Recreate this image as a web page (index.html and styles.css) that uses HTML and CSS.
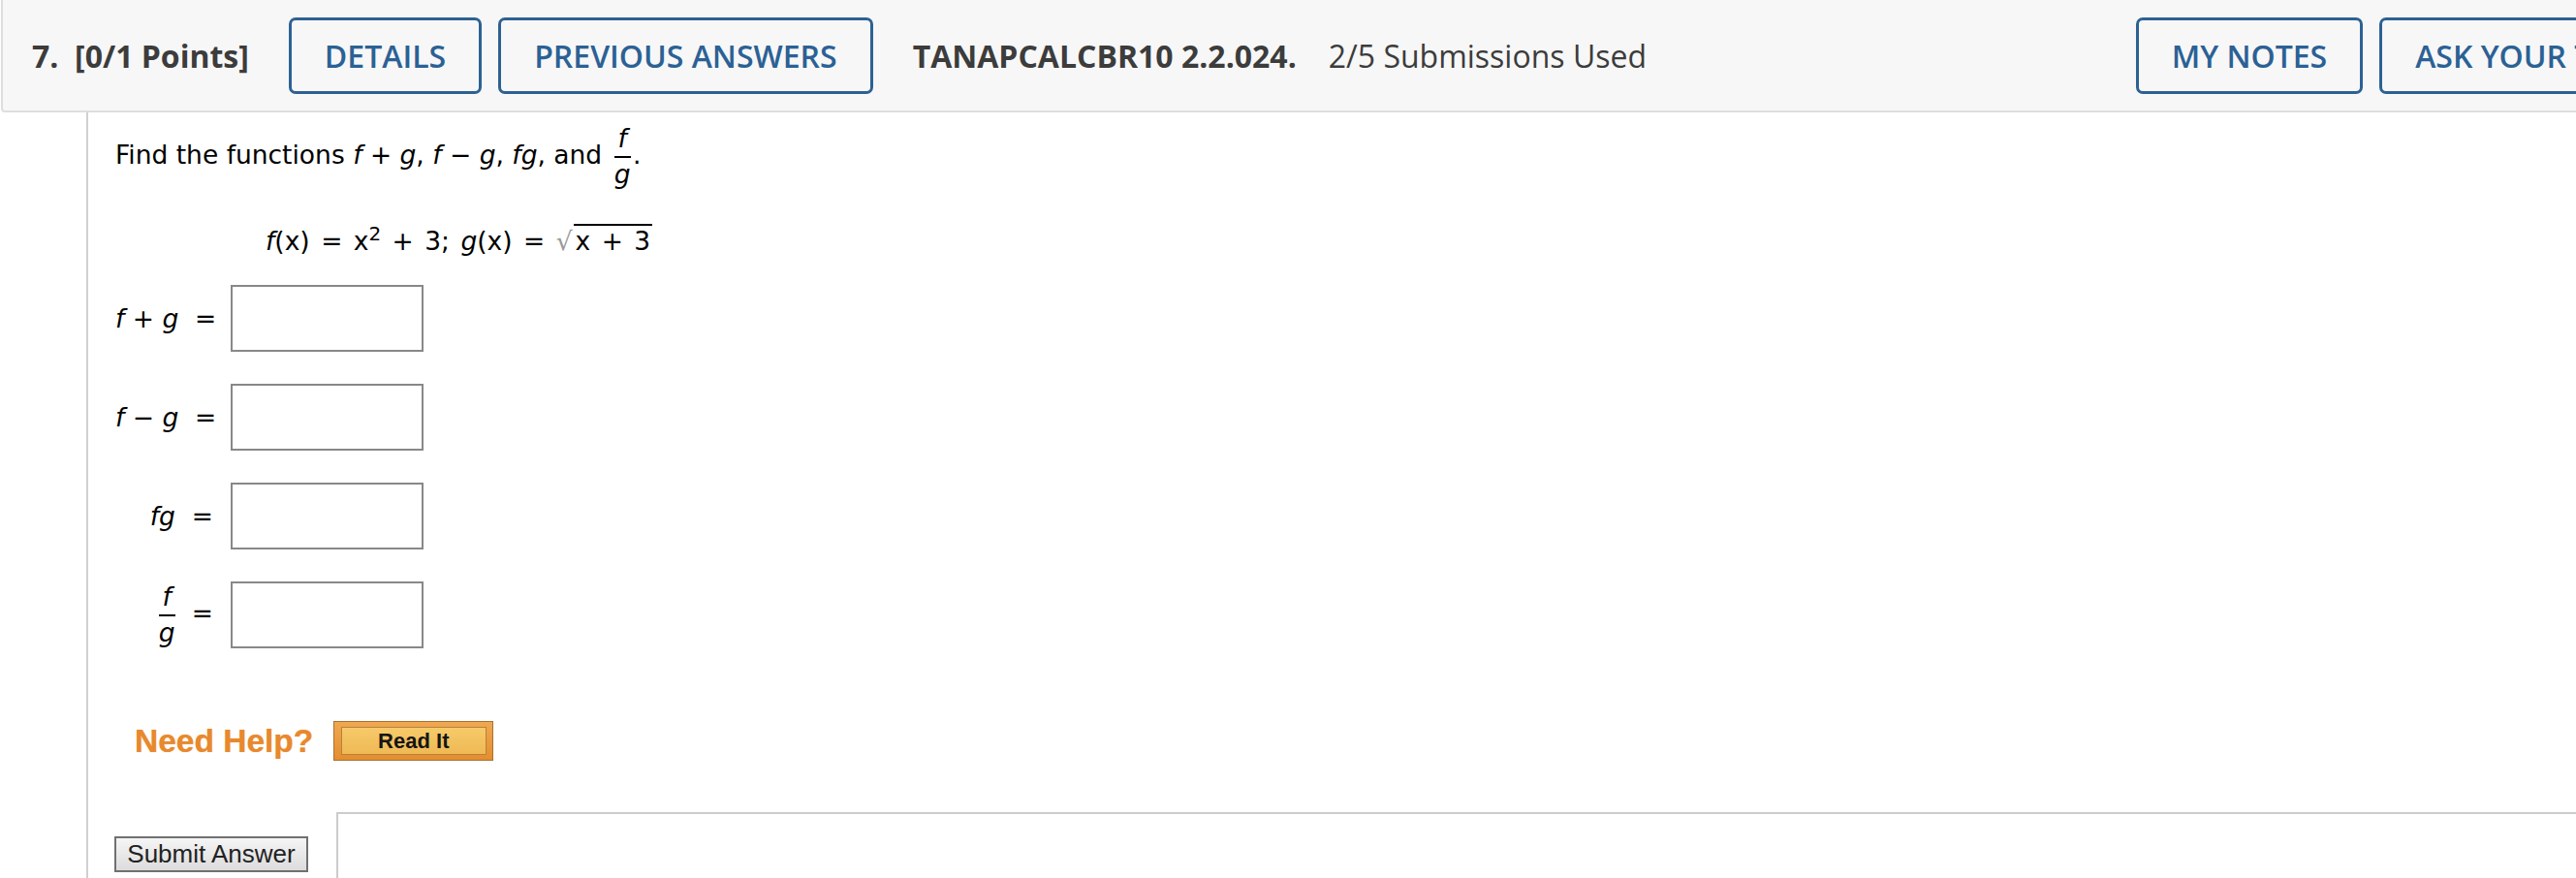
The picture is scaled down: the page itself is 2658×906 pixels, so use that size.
FILE: index.html
```html
<!DOCTYPE html>
<html lang="en">
<head>
  <meta charset="UTF-8">
  <title>Question 7</title>
  <link rel="stylesheet" href="styles.css">
</head>
<body>
<div class="page">

<div class="qhead">
  <span class="qnum">7.&nbsp; [0/1 Points]</span>
  <button class="hbtn">DETAILS</button>
  <button class="hbtn">PREVIOUS ANSWERS</button>
  <span class="qid">TANAPCALCBR10 2.2.024.</span>
  <span class="subs">2/5 Submissions Used</span>
  <div class="hright">
    <button class="hbtn">MY NOTES</button>
    <button class="hbtn">ASK YOUR TEACHER</button>
  </div>
</div>

<div class="qbody">
  <p class="prompt">Find the functions <i>f</i> + <i>g</i>, <i>f</i> &minus; <i>g</i>, <i>fg</i>, and <span class="frac"><span class="num"><i>f</i></span><span class="den"><i>g</i></span></span>.</p>

  <p class="given"><i>f</i>(x) = x<sup>2</sup> + 3; <i>g</i>(x) = <span class="rad">&radic;</span><span class="radicand">x + 3</span></p>

  <div class="answers">
    <span class="lbl"><i>f</i> + <i>g</i>&nbsp; =</span>
    <input class="ans" type="text">
    <span class="lbl"><i>f</i> &minus; <i>g</i>&nbsp; =</span>
    <input class="ans" type="text">
    <span class="lbl"><i>fg</i>&nbsp; =</span>
    <input class="ans" type="text">
    <span class="lbl"><span class="frac"><span class="num"><i>f</i></span><span class="den"><i>g</i></span></span>&nbsp; =</span>
    <input class="ans" type="text">
  </div>

  <div class="help">
    <span class="needhelp">Need Help?</span>
    <span class="readit"><span class="readit-in">Read It</span></span>
  </div>

  <div class="submitrow">
    <button class="submit">Submit Answer</button>
    <div class="feedback"></div>
  </div>
</div>

</div>
</body>
</html>
```

FILE: styles.css
```css
body {
  margin: 0;
  overflow: hidden;
  background: #fff;
  color: #000;
  font-family: "DejaVu Sans", Verdana, sans-serif;
}
.page {
  width: 2863px;
}

/* question header bar */
.qhead {
  display: flex;
  align-items: center;
  height: 114px;
  margin-left: 1px;
  padding: 0 30px;
  background: #f7f7f7;
  border-left: 2px solid #dedede;
  border-bottom: 2px solid #dedede;
  border-bottom-left-radius: 4px;
  font-family: "Open Sans", sans-serif;
  color: #3c3c3c;
  white-space: nowrap;
}
.qnum {
  font-size: 32px;
  font-weight: 700;
  margin-right: 41px;
}
.hbtn {
  height: 79px;
  padding: 0 34px;
  margin-right: 17px;
  border: 3px solid #2d6193;
  border-radius: 7px;
  background: #f7f7f7;
  color: #2b6195;
  font-family: "Open Sans", sans-serif;
  font-size: 32px;
  font-weight: 600;
}
.hbtn.wide {
  padding: 0 32px;
}
.qid {
  font-size: 32px;
  font-weight: 700;
  margin-left: 24px;
  margin-right: 33px;
}
.subs {
  font-size: 32px;
}
.hright {
  margin-left: auto;
  display: flex;
}
.hright .hbtn:last-child {
  margin-right: 0;
}

/* question body */
.qbody {
  margin-left: 89px;
  padding: 13px 0 0 28px;
  border-left: 2px solid #d0d0d0;
  font-size: 26.5px;
}
.prompt {
  margin: 0;
  line-height: 30px;
}
.frac {
  display: inline-flex;
  flex-direction: column;
  align-items: center;
  vertical-align: middle;
  line-height: 28px;
}
.prompt .frac {
  margin: 0 2px 0 4px;
}
.frac .num {
  padding: 0 4px 4px;
  border-bottom: 2px solid #000;
}
.frac .den {
  padding-top: 3px;
}
.given {
  margin: 40px 0 0 155px;
  line-height: 30px;
  word-spacing: 3px;
}
.given sup {
  font-size: 20px;
  line-height: 0;
}
.rad {
  color: #999;
  margin-right: 1px;
}
.radicand {
  border-top: 2px solid #000;
  padding: 0 2px;
}

.answers {
  display: grid;
  grid-template-columns: 101px 199px;
  grid-auto-rows: 69px;
  column-gap: 18px;
  row-gap: 33px;
  align-items: center;
  margin-top: 30px;
}
.lbl {
  text-align: right;
  white-space: nowrap;
}
.ans {
  box-sizing: border-box;
  width: 199px;
  height: 69px;
  margin: 0;
  border: 2px solid #888;
  background: #fff;
}

.help {
  display: flex;
  align-items: center;
  height: 41px;
  margin-top: 75px;
  padding-left: 20px;
}
.needhelp {
  font-family: "Liberation Sans", Arial, sans-serif;
  font-size: 33.5px;
  font-weight: 700;
  color: #e8892e;
  text-shadow: 0 0 1px rgba(232, 137, 46, 0.7);
  margin-right: 21px;
}
.readit {
  box-sizing: border-box;
  display: flex;
  align-items: center;
  justify-content: center;
  width: 165px;
  height: 41px;
  border: 1px solid #a8722f;
  background: linear-gradient(#f0a851, #e38d2f);
}
.readit-in {
  box-sizing: border-box;
  width: 150px;
  height: 29px;
  border: 1px solid #b9813b;
  background: linear-gradient(#f6ca6a, #efb955);
  font-family: "Liberation Sans", Arial, sans-serif;
  font-size: 22px;
  font-weight: 700;
  line-height: 27px;
  text-align: center;
  color: #151515;
}

.submitrow {
  display: flex;
  align-items: flex-start;
  margin-top: 53px;
  margin-left: -1px;
}
.submit {
  width: 200px;
  height: 37px;
  margin-top: 25px;
  padding: 0;
  border: 2px solid #707070;
  background: linear-gradient(#f5f5f5, #dcdcdc);
  font-family: "Liberation Sans", Arial, sans-serif;
  font-size: 26px;
  color: #222;
}
.feedback {
  flex: 1;
  height: 200px;
  margin-left: 29px;
  border-top: 2px solid #cccccc;
  border-left: 2px solid #cccccc;
}
```
